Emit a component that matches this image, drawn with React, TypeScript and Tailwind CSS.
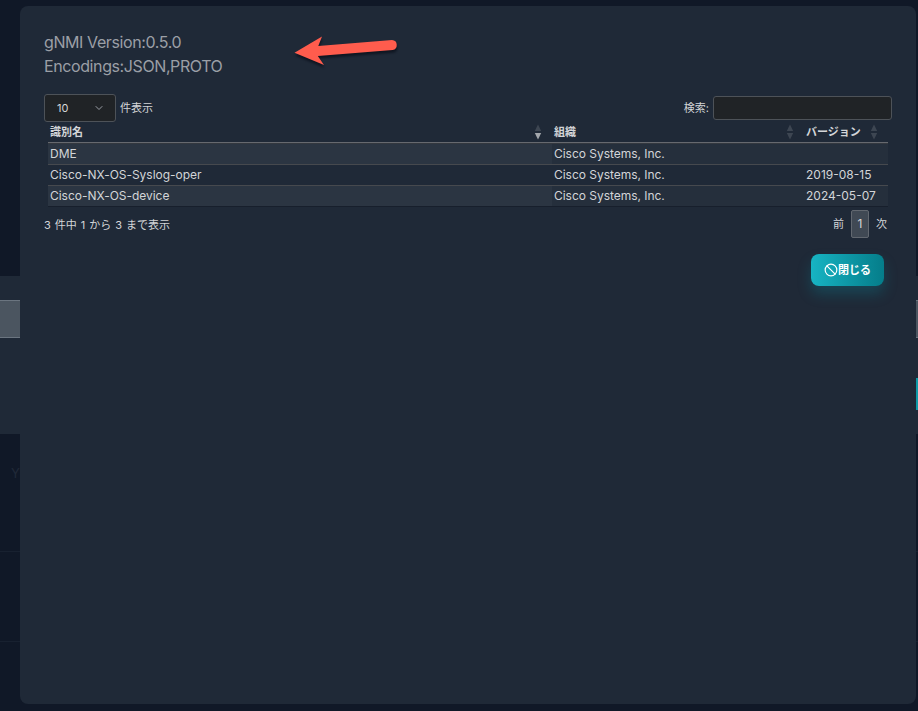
import React from 'react';
import { ChevronDown, Ban } from 'lucide-react';

type SortDirection = 'asc' | 'desc' | null;

interface Model {
  name: string;
  organization: string;
  version: string;
}

const MODELS: Model[] = [
  { name: 'DME', organization: 'Cisco Systems, Inc.', version: '' },
  { name: 'Cisco-NX-OS-Syslog-oper', organization: 'Cisco Systems, Inc.', version: '2019-08-15' },
  { name: 'Cisco-NX-OS-device', organization: 'Cisco Systems, Inc.', version: '2024-05-07' },
];

const SortIcon: React.FC<{ direction?: SortDirection }> = ({ direction = null }) => (
  <svg width="8" height="16" viewBox="0 0 8 16" className="shrink-0">
    <path d="M4 0.5 7.2 7H0.8Z" fill={direction === 'asc' ? '#a3a7ac' : '#3d4652'} />
    <path d="M4 15.5 7.2 9H0.8Z" fill={direction === 'desc' ? '#a3a7ac' : '#3d4652'} />
  </svg>
);

const HeaderCell: React.FC<{ label: string; direction?: SortDirection; className?: string }> = ({
  label,
  direction,
  className = '',
}) => (
  <div className={`flex items-center justify-between pl-[2px] ${className}`}>
    <span>{label}</span>
    <SortIcon direction={direction} />
  </div>
);

// Page behind the dialog, only visible along its edges
const Backdrop: React.FC = () => (
  <div className="flex h-full flex-col">
    <div className="h-[276px] shrink-0" />
    <div className="flex h-[158px] shrink-0 flex-col bg-[#1f2937] pt-6">
      <div className="h-[38px] border-y border-[#6b7580] bg-[#4b5560]" />
      <div className="mt-10 h-8 w-full bg-gradient-to-r from-[#1f2937] from-50% to-[#0e9aa7] to-50%" />
    </div>
    <div className="h-[118px] shrink-0 border-b border-[#182130] pt-[31px] pl-[11px] text-[13px] leading-4 text-[#202938]">Y</div>
    <div className="h-[90px] shrink-0 border-b border-[#182130]" />
  </div>
);

const Arrow: React.FC = () => (
  <svg width="116" height="48" viewBox="0 0 116 48" className="absolute top-[20px] left-[268px]">
    <path
      d="M6.5 27 34 10.5 30.5 20 104 14A5.1 5.1 0 0 1 104.6 24.1L29.8 30 36 39.2Z"
      transform="translate(0.5 2.6)"
      fill="#0b111c"
      opacity="0.8"
      className="blur-[1px]"
    />
    <path
      d="M6.5 26.7 34 10.4 30.3 20 104 13.9A5.1 5.1 0 0 1 104.6 24L29.8 30 36 39Z"
      fill="#ff5c4d"
    />
  </svg>
);

export default function App() {
  return (
    <div className="relative h-[711px] w-[918px] overflow-hidden bg-[#101827] font-['Inter','Noto_Sans_CJK_JP',sans-serif] text-[#d3d5d8]">
      <Backdrop />

      <div className="absolute top-[6px] left-5 h-[698px] w-[896px] rounded-lg bg-[#1f2937] p-6">
        <div className="text-base leading-6 tracking-[-0.4px] text-[#9b9fa6]">
          <p>gNMI Version:0.5.0</p>
          <p>Encodings:JSON,PROTO</p>
        </div>
        <Arrow />

        {/* Page length and search */}
        <div className="mt-4 flex h-7 items-center justify-between text-[11px]">
          <label className="flex items-center gap-1">
            <button className="flex h-7 w-[72px] items-center justify-between rounded-[3px] border border-[#4d5258] bg-[#202326] pr-[10px] pl-3">
              <span>10</span>
              <ChevronDown size={12} className="text-[#9b9fa6]" />
            </button>
            件表示
          </label>
          <label className="flex items-center gap-1">
            検索:
            <input className="h-6 w-[179px] rounded-[3px] border border-[#4d5258] bg-[#202326] px-2 outline-none" />
          </label>
        </div>

        {/* Models */}
        <div className="mx-1 text-[12px]">
          <div className="flex h-[21px] border-b border-[#66696f] text-[11px] font-bold">
            <HeaderCell label="識別名" direction="desc" className="w-[504px] pr-[10px]" />
            <HeaderCell label="組織" className="w-[252px] pr-[10px]" />
            <HeaderCell label="バージョン" className="w-[84px] pr-[10px]" />
          </div>
          <div className="border-t border-[#33383f]">
            {MODELS.map((m, i) => (
              <div
                key={m.name}
                className={`flex h-[21px] items-center border-b ${i % 2 === 0 ? 'bg-[#252f3c]' : ''} ${
                  i === MODELS.length - 1 ? 'border-[#171f2c]' : 'border-[#46494e]'
                }`}
              >
                <div className={`flex h-full w-[504px] items-center pl-[2px] tracking-[-0.03px] ${i % 2 === 0 ? 'bg-[#2b3542]' : ''}`}>
                  {m.name}
                </div>
                <div className="w-[252px] pl-[2px] tracking-[-0.03px]">{m.organization}</div>
                <div className="w-[84px] pl-[2px]">{m.version}</div>
              </div>
            ))}
          </div>
        </div>

        {/* Info and paging */}
        <div className="mt-[3px] flex h-7 items-center justify-between text-[11px]">
          <span className="pt-[3px] [word-spacing:0.9px]">3 件中 1 から 3 まで表示</span>
          <div className="flex items-center gap-[7px] pr-[5px]">
            <button>前</button>
            <button className="h-7 w-[18px] rounded-[2px] border border-[#626870] bg-[#404954] text-[12px]">1</button>
            <button>次</button>
          </div>
        </div>

        <div className="mt-4 flex justify-end pr-2">
          <button className="flex h-8 w-[73px] items-center justify-center rounded-lg bg-gradient-to-r from-[#17b4c3] to-[#057d8a] text-[11px] font-bold text-white shadow-[0_8px_14px_rgba(8,145,160,0.28)]">
            <Ban size={14} strokeWidth={2} />
            閉じる
          </button>
        </div>
      </div>
    </div>
  );
}
